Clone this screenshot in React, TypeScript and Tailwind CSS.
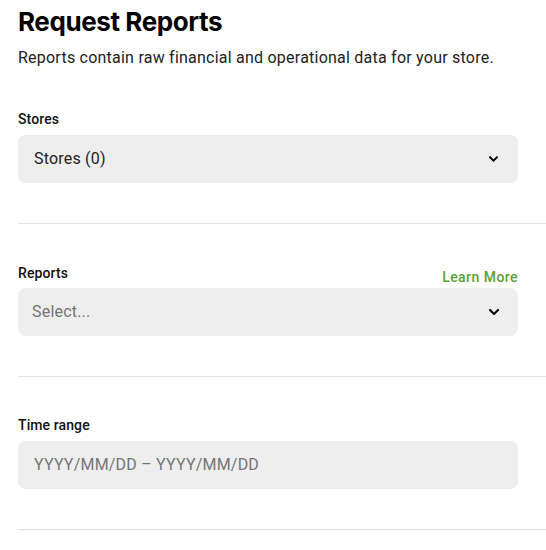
import React from "react";

function Chevron({ small }: { small?: boolean }) {
  return small ? (
    <svg width="9" height="6" viewBox="0 0 9 6" className="shrink-0 mr-[1px]">
      <path d="M1 1.2l3.5 3.5 3.5-3.5" fill="none" stroke="#000" strokeWidth="1.8" strokeLinecap="square" />
    </svg>
  ) : (
    <svg width="10" height="6" viewBox="0 0 10 6" className="shrink-0">
      <path d="M1 1l4 4 4-4" fill="none" stroke="#000" strokeWidth="2" strokeLinecap="square" />
    </svg>
  );
}

export default function App() {
  return (
    <div className="w-[546px] h-[550px] bg-white pl-[18px] overflow-hidden" style={{ fontFamily: "Roboto, 'Liberation Sans', sans-serif" }}>
      <h1 className="pt-[4px] text-[26px] leading-[36px] font-bold tracking-[-0.4px] text-black" style={{ fontFamily: "Inter, 'Liberation Sans', sans-serif" }}>
        Request Reports
      </h1>
      <p className="mt-[6px] text-[16px] leading-[24px] tracking-[0.23px] text-[#222]">Reports contain raw financial and operational data for your store.</p>

      <section className="mt-[39px] pr-[28px]">
        <div className="text-[14px] leading-[20px] font-medium tracking-[0.1px] text-[#111]">Stores</div>
        <div className="mt-[6px] h-[48px] rounded-[8px] bg-[#eeeeee] flex items-center justify-between pl-[16px] pr-[19px]">
          <span className="text-[16px] tracking-[0.2px] text-[#222]">Stores (0)</span>
          <Chevron small />
        </div>
      </section>
      <div className="mt-[40px] h-px bg-[#e2e2e2]" />

      <section className="mt-[39px] pr-[28px]">
        <div className="flex justify-between h-[24px]">
          <div className="text-[14px] leading-[20px] font-medium tracking-[0.1px] text-[#111]">Reports</div>
          <a className="self-end text-[14px] leading-[20px] font-medium tracking-[0.45px] text-[#5aa334]">Learn More</a>
        </div>
        <div className="mt-[1px] h-[48px] rounded-[8px] bg-[#eeeeee] flex items-center justify-between pl-[14px] pr-[19px]">
          <span className="text-[16px] tracking-[0.2px] text-[#757575]">Select...</span>
          <Chevron />
        </div>
      </section>
      <div className="mt-[40px] h-px bg-[#e2e2e2]" />

      <section className="mt-[38px] pr-[28px]">
        <div className="text-[14px] leading-[20px] font-medium tracking-[0.1px] text-[#111]">Time range</div>
        <div className="mt-[6px] h-[48px] rounded-[8px] bg-[#eeeeee] flex items-center pl-[16px] pr-[19px]">
          <span className="text-[16px] tracking-[0.2px] text-[#757575]">YYYY/MM/DD – YYYY/MM/DD</span>
        </div>
      </section>
      <div className="mt-[40px] h-px bg-[#e2e2e2]" />
    </div>
  );
}
